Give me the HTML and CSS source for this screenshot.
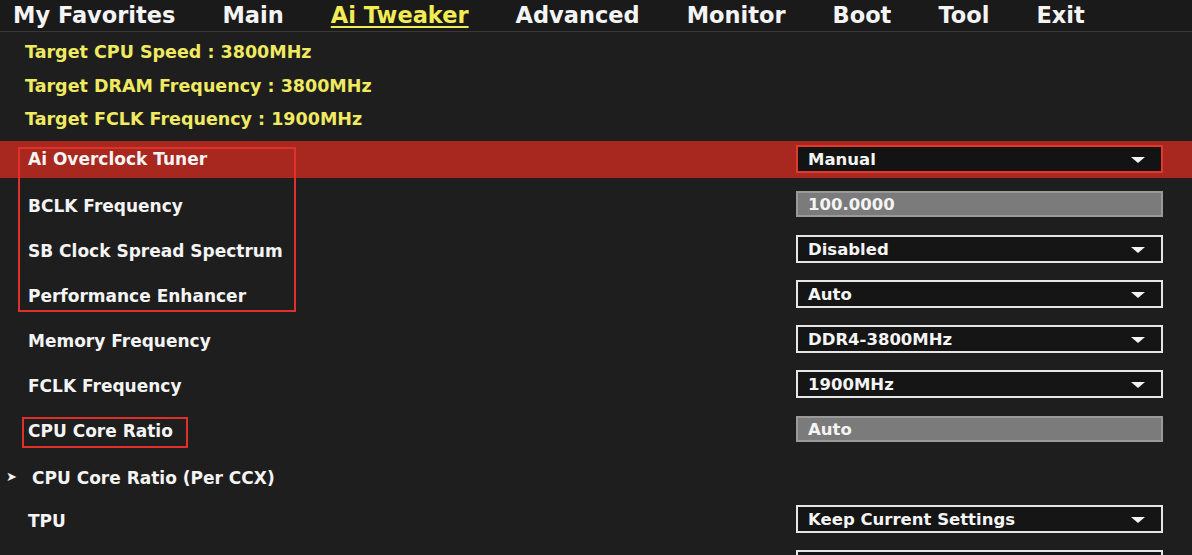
FILE: index.html
```html
<!DOCTYPE html>
<html>
<head>
<meta charset="utf-8">
<link rel="stylesheet" href="styles.css">
</head>
<body>
<div class="screen">
  <nav class="tabs">
    <span class="tab">My Favorites</span>
    <span class="tab">Main</span>
    <span class="tab active">Ai Tweaker</span>
    <span class="tab">Advanced</span>
    <span class="tab">Monitor</span>
    <span class="tab">Boot</span>
    <span class="tab">Tool</span>
    <span class="tab">Exit</span>
  </nav>
  <div class="info">
    <div class="info-line">Target CPU Speed : 3800MHz</div>
    <div class="info-line">Target DRAM Frequency : 3800MHz</div>
    <div class="info-line">Target FCLK Frequency : 1900MHz</div>
  </div>
  <div class="rows">
    <div class="row selected">
      <span class="label">Ai Overclock Tuner</span>
      <span class="field select sel-red">Manual<i class="arrow"></i></span>
    </div>
    <div class="row">
      <span class="label">BCLK Frequency</span>
      <span class="field grey">100.0000</span>
    </div>
    <div class="row">
      <span class="label">SB Clock Spread Spectrum</span>
      <span class="field select">Disabled<i class="arrow"></i></span>
    </div>
    <div class="row">
      <span class="label">Performance Enhancer</span>
      <span class="field select">Auto<i class="arrow"></i></span>
    </div>
    <div class="row">
      <span class="label">Memory Frequency</span>
      <span class="field select">DDR4-3800MHz<i class="arrow"></i></span>
    </div>
    <div class="row">
      <span class="label">FCLK Frequency</span>
      <span class="field select">1900MHz<i class="arrow"></i></span>
    </div>
    <div class="row">
      <span class="label">CPU Core Ratio</span>
      <span class="field grey">Auto</span>
    </div>
    <div class="row">
      <span class="label sub"><span class="pointer">➤</span>CPU Core Ratio (Per CCX)</span>
    </div>
    <div class="row">
      <span class="label">TPU</span>
      <span class="field select">Keep Current Settings<i class="arrow"></i></span>
    </div>
    <div class="row">
      <span class="label"></span>
      <span class="field select"></span>
    </div>
  </div>
  <div class="mark mark-group"></div>
  <div class="mark mark-ratio"></div>
</div>
</body>
</html>
```
FILE: styles.css
```css
html, body {
  margin: 0;
  padding: 0;
  background: #1d1d1d;
}
.screen {
  position: relative;
  width: 1192px;
  height: 555px;
  overflow: hidden;
  background: #1e1e1e;
  font-family: "DejaVu Sans", "Open Sans", sans-serif;
  font-weight: 700;
  color: #f3f3f3;
}
.tabs {
  display: flex;
  height: 31px;
  align-items: center;
  padding-left: 13px;
  gap: 47px;
  border-bottom: 1px solid #383838;
  background: #1a1a1a;
}
.tab {
  font-size: 22.5px;
  line-height: 31px;
  color: #f4f4f4;
}
.tab.active {
  color: #f2ec55;
  text-decoration: underline;
  text-decoration-thickness: 2px;
  text-underline-offset: 3px;
}
.info {
  padding: 4px 0 0 25px;
}
.info-line {
  height: 33.5px;
  line-height: 33.5px;
  font-size: 17.5px;
  color: #f0ea62;
}
.rows {
  margin-top: 4px;
  display: flex;
  flex-direction: column;
  gap: 8px;
}
.row {
  display: flex;
  align-items: center;
  justify-content: space-between;
  height: 37px;
  padding: 0 29px 0 28px;
}
.row.selected {
  background: #a8271f;
}
.label {
  font-size: 17px;
  color: #f4f4f4;
  position: relative;
  padding-top: 3px;
}
.row.selected .label {
  padding-top: 0;
}
.label.sub {
  padding-left: 4px;
  padding-top: 7px;
}
.pointer {
  position: absolute;
  left: -22px;
  top: 8px;
  font-size: 13px;
}
.field {
  box-sizing: border-box;
  width: 367px;
  height: 28px;
  display: flex;
  align-items: center;
  padding-left: 10px;
  font-size: 16.5px;
  color: #f4f4f4;
  position: relative;
}
.select {
  border: 2px solid #e6e6e6;
  background: #151515;
}
.sel-red {
  border-color: #e2392e;
  background: #131313;
}
.grey {
  border: 2px solid #9a9a9a;
  background: #7b7b7b;
  height: 26px;
}
.arrow {
  position: absolute;
  right: 16px;
  top: 10px;
  width: 0;
  height: 0;
  border-left: 7px solid transparent;
  border-right: 7px solid transparent;
  border-top: 6px solid #f4f4f4;
}
.mark {
  position: absolute;
  border: 2px solid #e0302c;
  box-sizing: border-box;
}
.mark-group {
  left: 18px;
  top: 147px;
  width: 278px;
  height: 165px;
}
.mark-ratio {
  left: 22px;
  top: 417px;
  width: 166px;
  height: 31px;
}
```
